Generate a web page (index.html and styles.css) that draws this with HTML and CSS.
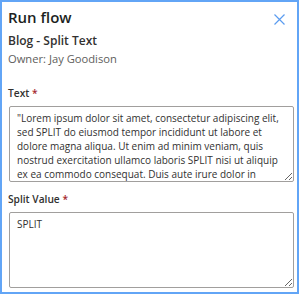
FILE: index.html
```html
<!DOCTYPE html>
<html>
<head>
<meta charset="utf-8">
<link rel="stylesheet" href="styles.css">
</head>
<body>
<div class="panel">
  <div class="header">
    <h1 class="title">Run flow</h1>
    <button class="close" aria-label="Close">
      <svg width="11" height="11" viewBox="0 0 11 11"><path d="M0.5 0.5 L10.5 10.5 M10.5 0.5 L0.5 10.5" stroke="#5b9cf0" stroke-width="1.2" fill="none"/></svg>
    </button>
  </div>
  <h2 class="flow-name">Blog - Split Text</h2>
  <div class="owner">Owner: Jay Goodison</div>
  <div class="field field-text">
    <label class="label">Text <span class="req">*</span></label>
    <textarea class="input input-text" readonly>"Lorem ipsum dolor sit amet, consectetur adipiscing elit, sed SPLIT do eiusmod tempor incididunt ut labore et dolore magna aliqua. Ut enim ad minim veniam, quis nostrud exercitation ullamco laboris SPLIT nisi ut aliquip ex ea commodo consequat. Duis aute irure dolor in reprehenderit in voluptate velit esse cillum dolore eu fugiat nulla pariatur."</textarea>
  </div>
  <div class="field">
    <label class="label">Split Value <span class="req">*</span></label>
    <textarea class="input input-split" readonly>SPLIT</textarea>
  </div>
</div>
</body>
</html>
```

FILE: styles.css
```css
html, body {
  margin: 0;
  padding: 0;
  background: #ffffff;
}
.panel {
  box-sizing: border-box;
  width: 299px;
  height: 294px;
  border: 2px solid #62a5f6;
  padding: 5px 6px 0 5px;
  font-family: "Open Sans", "Noto Sans", sans-serif;
  color: #201f1e;
}
.header {
  display: flex;
  justify-content: space-between;
  align-items: flex-start;
}
.title {
  margin: 0 0 0 1px;
  font-size: 15px;
  line-height: 20px;
  font-weight: 600;
}
.close {
  border: 0;
  background: none;
  padding: 0;
  margin: 7px 6px 0 0;
  width: 11px;
  height: 11px;
  display: block;
}
.close svg { display: block; }
.flow-name {
  margin: 6px 0 0 1px;
  font-size: 12px;
  line-height: 16px;
  font-weight: 600;
  color: #323130;
}
.owner {
  margin: 3px 0 0 1px;
  font-size: 11.2px;
  line-height: 14px;
  color: #605e5c;
}
.field {
  display: flex;
  flex-direction: column;
}
.field-text { margin-top: 20px; }
.field + .field { margin-top: 10px; }
.label {
  margin-left: 1px;
  font-size: 10.2px;
  line-height: 14px;
  font-weight: 600;
  color: #323130;
}
.req { color: #a4262c; }
.input {
  box-sizing: border-box;
  margin: 6px 0 0 2px;
  width: 285px;
  height: 76px;
  border: 1px solid #a19f9d;
  border-radius: 2px;
  padding: 4px 9px 4px 7px;
  font-family: "Open Sans", "Noto Sans", sans-serif;
  font-size: 10px;
  line-height: 14px;
  color: #323130;
  background: #fff;
  overflow: hidden;
  resize: both;
  outline: none;
}
```
